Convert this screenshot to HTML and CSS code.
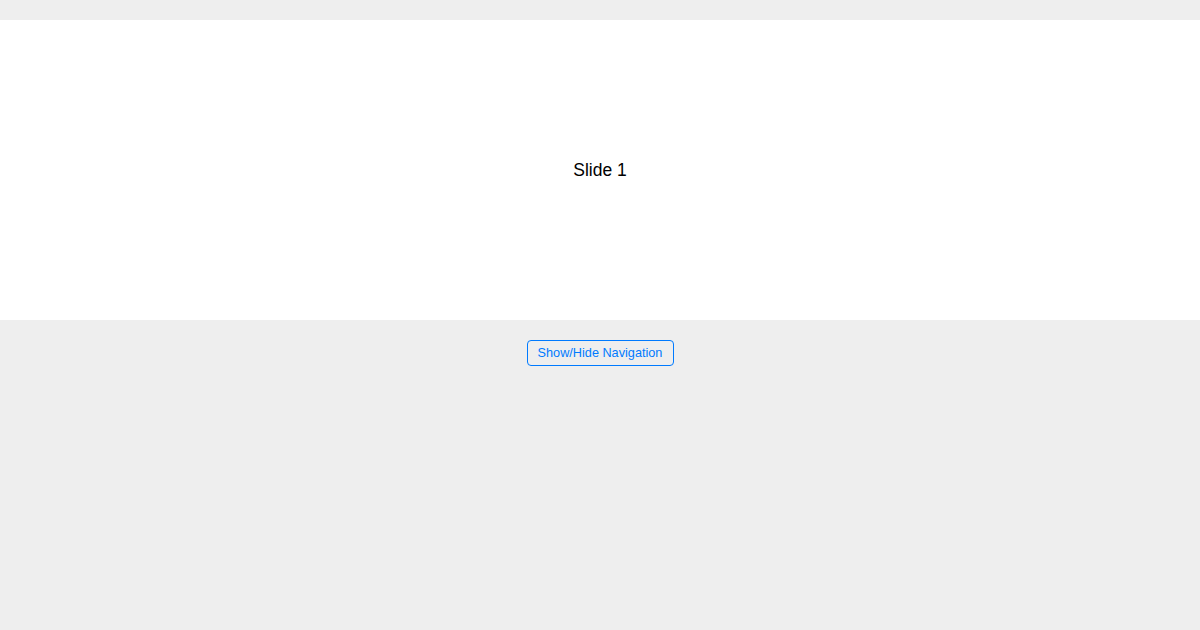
FILE: index.html
```html
<!DOCTYPE html>
<html>
<head>
<meta charset="utf-8">
<link rel="stylesheet" href="styles.css">
</head>
<body>
<div class="slider">
  <div class="slide">Slide 1</div>
</div>
<div class="controls">
  <button class="toggle">Show/Hide Navigation</button>
</div>
</body>
</html>
```
FILE: styles.css
```css
html, body {
  margin: 0;
  padding: 0;
  background: #eeeeee;
  font-family: "Liberation Sans", Arial, Helvetica, sans-serif;
}
body {
  padding-top: 20px;
}
.slider {
  background: #ffffff;
  height: 300px;
  display: flex;
  align-items: center;
  justify-content: center;
}
.slide {
  font-size: 17.5px;
  color: #000;
}
.controls {
  display: flex;
  justify-content: center;
  padding-top: 20px;
}
.toggle {
  height: 26px;
  width: 147px;
  padding: 0 0 1px 0;
  background: transparent;
  border: 1px solid #007aff;
  border-radius: 4px;
  color: #007aff;
  font-family: "Liberation Sans", Arial, Helvetica, sans-serif;
  font-size: 12.7px;
  cursor: pointer;
}
```
